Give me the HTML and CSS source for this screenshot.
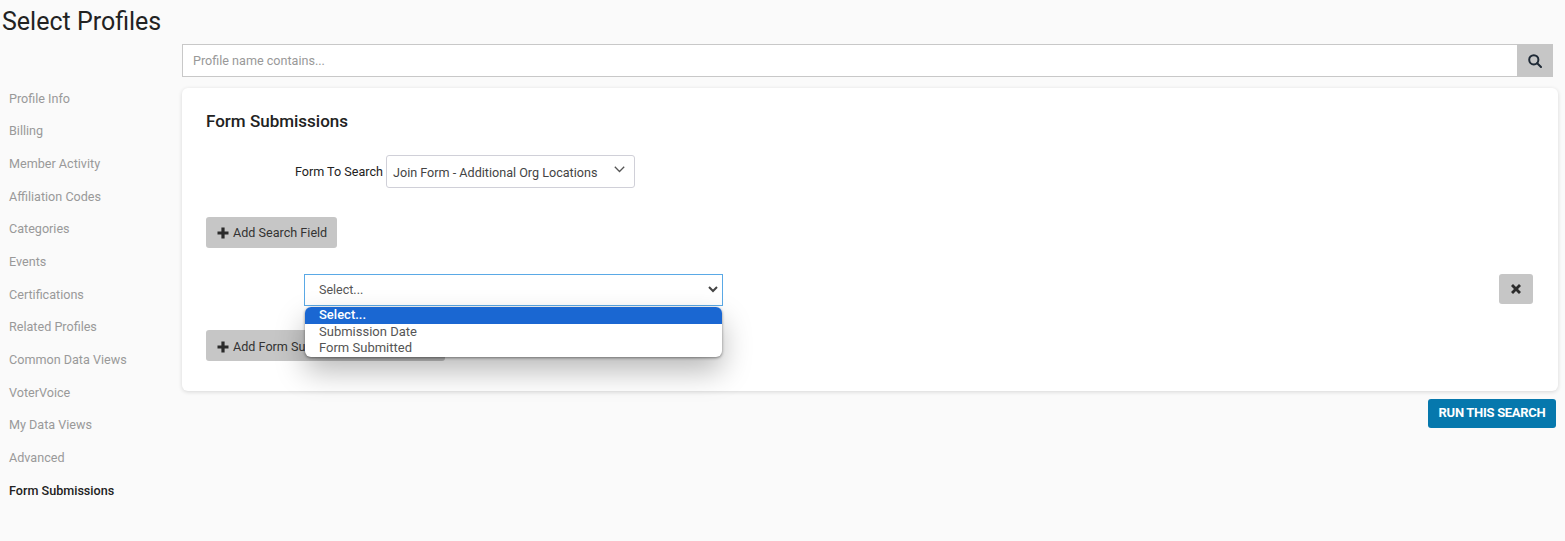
FILE: index.html
```html
<!DOCTYPE html>
<html lang="en">
<head>
    <meta charset="UTF-8">
    <meta name="viewport" content="width=device-width, initial-scale=1.0">
    <title>Select Profiles</title>
    <link rel="stylesheet" href="styles.css">
</head>
<body>
    <h1 class="page-title">Select Profiles</h1>

    <div class="layout">
        <ul class="side-nav">
            <li><a href="#">Profile Info</a></li>
            <li><a href="#">Billing</a></li>
            <li><a href="#">Member Activity</a></li>
            <li><a href="#">Affiliation Codes</a></li>
            <li><a href="#">Categories</a></li>
            <li><a href="#">Events</a></li>
            <li><a href="#">Certifications</a></li>
            <li><a href="#">Related Profiles</a></li>
            <li><a href="#">Common Data Views</a></li>
            <li><a href="#">VoterVoice</a></li>
            <li><a href="#">My Data Views</a></li>
            <li><a href="#">Advanced</a></li>
            <li><a href="#" class="active">Form Submissions</a></li>
        </ul>

        <div class="main">
            <div class="search-bar">
                <input type="text" class="search-input" placeholder="Profile name contains...">
                <button class="search-button" aria-label="Search">
                    <svg width="14" height="14" viewBox="0 0 14 14" fill="none" stroke="#1f2a36" stroke-width="2">
                        <circle cx="5.8" cy="5.8" r="4.6"/>
                        <path d="M9.2 9.2L13 13" stroke-linecap="round"/>
                    </svg>
                </button>
            </div>

            <div class="card">
                <h2 class="card-title">Form Submissions</h2>

                <div class="form-row">
                    <label class="form-label">Form To Search</label>
                    <div class="form-select">
                        <span class="form-select-text">Join Form - Additional Org Locations</span>
                        <svg width="11" height="7" viewBox="0 0 11 7" fill="none" stroke="#555" stroke-width="1.3">
                            <path d="M0.8 0.8L5.5 5.5L10.2 0.8"/>
                        </svg>
                    </div>
                </div>

                <button class="grey-button add-field">
                    <svg class="plus" width="12" height="12" viewBox="0 0 12 12" fill="#2b2b2b">
                        <path d="M4.4 0.5h3.2v3.9h3.9v3.2H7.6v3.9H4.4V7.6H0.5V4.4h3.9z"/>
                    </svg>
                    Add Search Field
                </button>

                <div class="field-row">
                    <div class="open-select">
                        <div class="select-box">
                            <span>Select...</span>
                            <svg width="10" height="7" viewBox="0 0 10 7" fill="none" stroke="#444" stroke-width="2">
                                <path d="M1 1L5 5L9 1"/>
                            </svg>
                        </div>
                        <ul class="select-menu">
                            <li class="selected">Select...</li>
                            <li>Submission Date</li>
                            <li>Form Submitted</li>
                        </ul>
                    </div>
                    <button class="grey-button remove-button" aria-label="Remove">
                        <svg width="12" height="12" viewBox="0 0 12 12" fill="#2b2b2b">
                            <path d="M3 1l3 3 3-3 2 2-3 3 3 3-2 2-3-3-3 3-2-2 3-3-3-3z"/>
                        </svg>
                    </button>
                </div>

                <button class="grey-button add-form">
                    <svg class="plus" width="12" height="12" viewBox="0 0 12 12" fill="#2b2b2b">
                        <path d="M4.4 0.5h3.2v3.9h3.9v3.2H7.6v3.9H4.4V7.6H0.5V4.4h3.9z"/>
                    </svg>
                    <span>Add Form Su</span>
                </button>
            </div>

            <div class="actions">
                <button class="run-button">RUN THIS SEARCH</button>
            </div>
        </div>
    </div>
</body>
</html>
```

FILE: styles.css
```css
* {
    box-sizing: border-box;
}
html, body {
    height: 100%;
}
body {
    font-family: Roboto, Arial, sans-serif;
    background-color: #fafafa;
    color: #222;
    margin: 0;
    padding: 0;
    overflow: hidden;
}
.page-title {
    margin: 0;
    padding: 7px 0 0 2px;
    height: 44px;
    font-size: 25px;
    line-height: 29px;
    font-weight: 400;
    color: #222;
}
.layout {
    display: flex;
}
.side-nav {
    list-style-type: none;
    margin: 0;
    padding: 44.7px 0 0 9px;
    width: 182px;
    flex-shrink: 0;
}
.side-nav li {
    height: 32.68px;
    line-height: 17px;
}
.side-nav a {
    color: #999;
    font-size: 12.6px;
    text-decoration: none;
}
.side-nav a.active {
    color: #222;
    font-weight: 500;
}
.main {
    width: 1376px;
}
.search-bar {
    display: flex;
    width: 1371px;
    height: 33px;
}
.search-input {
    flex: 1;
    height: 33px;
    padding: 0 10px;
    border: 1px solid #c8c8c8;
    border-right: none;
    background-color: #fff;
    font-family: Roboto, Arial, sans-serif;
    font-size: 12.6px;
    outline: none;
}
.search-input::placeholder {
    color: #999;
    opacity: 1;
}
.search-button {
    display: flex;
    align-items: center;
    justify-content: center;
    width: 36px;
    height: 33px;
    padding: 0;
    border: none;
    background-color: #c6c6c6;
}
.card {
    margin-top: 11px;
    height: 303px;
    padding: 23px 24px 0;
    background-color: #fff;
    border-radius: 6px;
    box-shadow: 0 1px 4px rgba(0, 0, 0, 0.14);
}
.card-title {
    margin: 0;
    font-size: 17px;
    line-height: 21px;
    font-weight: 500;
    color: #222;
}
.form-row {
    display: flex;
    align-items: center;
    margin-top: 23px;
}
.form-label {
    width: 180px;
    padding-right: 3px;
    text-align: right;
    font-size: 12.6px;
    color: #222;
}
.form-select {
    display: flex;
    align-items: center;
    justify-content: space-between;
    width: 249px;
    height: 33px;
    padding: 0 9px 0 6px;
    border: 1px solid #d0d0d8;
    border-radius: 3px;
    font-size: 12.6px;
    color: #444;
    background-color: #fff;
}
.form-select-text {
    padding-top: 2px;
}
.form-select svg {
    margin-top: -4px;
}
.grey-button {
    display: flex;
    align-items: center;
    border: none;
    border-radius: 3px;
    background-color: #c6c6c6;
    color: #333;
    font-family: Roboto, Arial, sans-serif;
    font-size: 12.6px;
    padding: 0;
}
.plus {
    margin-right: 4px;
}
.add-field {
    margin-top: 29px;
    width: 131px;
    height: 31px;
    padding-left: 11px;
}
.field-row {
    display: flex;
    justify-content: space-between;
    margin-top: 26px;
    padding-left: 98px;
    padding-right: 1px;
}
.open-select {
    position: relative;
    width: 419px;
}
.select-box {
    display: flex;
    align-items: center;
    justify-content: space-between;
    height: 32px;
    padding: 0 4px 2px 14px;
    border: 1px solid #5aa9e6;
    background-color: #fff;
    font-size: 12.5px;
    color: #555;
}
.select-menu {
    position: absolute;
    top: 33px;
    left: 1px;
    width: 417px;
    margin: 0;
    padding: 0 0 1px;
    list-style-type: none;
    background-color: #fff;
    border-radius: 6px;
    overflow: hidden;
    font-size: 13px;
    line-height: 16px;
    color: #555;
    box-shadow: 0 1px 3px rgba(0, 0, 0, 0.45), 0 14px 30px rgba(0, 0, 0, 0.28);
    z-index: 5;
}
.select-menu li {
    padding-left: 14px;
}
.select-menu li.selected {
    height: 17px;
    background-color: #1a67d2;
    color: #fff;
    font-weight: 500;
}
.remove-button {
    justify-content: center;
    width: 34px;
    height: 30px;
}
.add-form {
    margin-top: 24px;
    width: 239px;
    height: 31px;
    padding: 2px 0 0 11px;
}
.actions {
    display: flex;
    justify-content: flex-end;
    margin-top: 8px;
    padding-right: 2px;
}
.run-button {
    width: 128px;
    height: 29px;
    padding: 0 0 2px;
    border: none;
    border-radius: 3px;
    background-color: #0678ad;
    color: #fff;
    font-family: Roboto, Arial, sans-serif;
    font-size: 13px;
    font-weight: 700;
    letter-spacing: -0.3px;
}
```
